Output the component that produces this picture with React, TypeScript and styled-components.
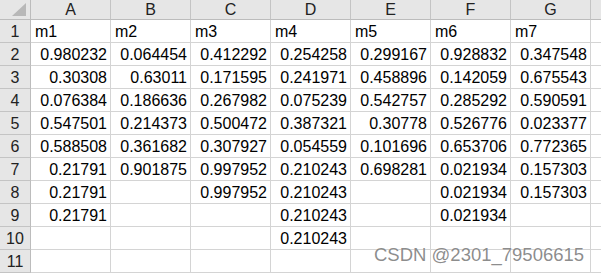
import * as React from 'react';
import styled, { createGlobalStyle } from 'styled-components';

const GlobalStyle = createGlobalStyle`
  html, body {
    margin: 0;
    padding: 0;
    background: #ffffff;
    overflow: hidden;
  }
`;

const Sheet = styled.div`
  position: relative;
  width: 601px;
  height: 274px;
  overflow: hidden;
  display: grid;
  grid-template-columns: 31px repeat(7, 80px) 80px;
  grid-template-rows: 20px repeat(11, 23px);
  font-family: 'Liberation Sans', Arial, sans-serif;
  font-size: 16px;
  color: #000;
`;

const Corner = styled.div`
  position: relative;
  box-sizing: border-box;
  background: #e6e6e6;
  border-right: 1px solid #bcbcbc;
  border-bottom: 1px solid #bcbcbc;

  &::after {
    content: '';
    position: absolute;
    right: 4px;
    bottom: 3px;
    width: 0;
    height: 0;
    border-left: 14px solid transparent;
    border-bottom: 13px solid #b8b8b8;
  }
`;

const ColHead = styled.div`
  box-sizing: border-box;
  background: #e6e6e6;
  border-right: 1px solid #c4c4c4;
  border-bottom: 1px solid #bcbcbc;
  display: flex;
  align-items: center;
  justify-content: center;
  line-height: 1;
  padding-top: 1px;
  color: #222;
`;

const RowHead = styled.div`
  box-sizing: border-box;
  background: #e6e6e6;
  border-right: 1px solid #bcbcbc;
  border-bottom: 1px solid #c4c4c4;
  display: flex;
  align-items: flex-end;
  justify-content: center;
  padding-bottom: 2px;
  line-height: 1;
  color: #222;
`;

const Cell = styled.div<{ $num?: boolean }>`
  box-sizing: border-box;
  border-right: 1px solid #d4d4d4;
  border-bottom: 1px solid #d4d4d4;
  display: flex;
  align-items: flex-end;
  justify-content: ${(p) => (p.$num ? 'flex-end' : 'flex-start')};
  padding: 0 3px 2px 4px;
  line-height: 1;
  white-space: nowrap;
  overflow: hidden;
`;

const Watermark = styled.div`
  position: absolute;
  left: 374px;
  top: 244px;
  font-family: 'Liberation Sans', Arial, sans-serif;
  font-size: 18.5px;
  color: rgba(120, 120, 120, 0.85);
  text-shadow: 0 0 1px rgba(255, 255, 255, 0.8);
  white-space: nowrap;
`;

const cols = ['A', 'B', 'C', 'D', 'E', 'F', 'G', ''];

const rows: string[][] = [
  ['m1', 'm2', 'm3', 'm4', 'm5', 'm6', 'm7'],
  ['0.980232', '0.064454', '0.412292', '0.254258', '0.299167', '0.928832', '0.347548'],
  ['0.30308', '0.63011', '0.171595', '0.241971', '0.458896', '0.142059', '0.675543'],
  ['0.076384', '0.186636', '0.267982', '0.075239', '0.542757', '0.285292', '0.590591'],
  ['0.547501', '0.214373', '0.500472', '0.387321', '0.30778', '0.526776', '0.023377'],
  ['0.588508', '0.361682', '0.307927', '0.054559', '0.101696', '0.653706', '0.772365'],
  ['0.21791', '0.901875', '0.997952', '0.210243', '0.698281', '0.021934', '0.157303'],
  ['0.21791', '', '0.997952', '0.210243', '', '0.021934', '0.157303'],
  ['0.21791', '', '', '0.210243', '', '0.021934', ''],
  ['', '', '', '0.210243', '', '', ''],
  ['', '', '', '', '', '', ''],
];

export default function App() {
  return (
    <>
      <GlobalStyle />
      <Sheet>
        <Corner />
        {cols.map((c, i) => (
          <ColHead key={i}>{c}</ColHead>
        ))}
        {rows.map((r, ri) => (
          <React.Fragment key={ri}>
            <RowHead>{ri + 1}</RowHead>
            {[...r, ''].map((v, ci) => (
              <Cell key={ci} $num={ri > 0}>
                {v}
              </Cell>
            ))}
          </React.Fragment>
        ))}
        <Watermark>CSDN @2301_79506615</Watermark>
      </Sheet>
    </>
  );
}
